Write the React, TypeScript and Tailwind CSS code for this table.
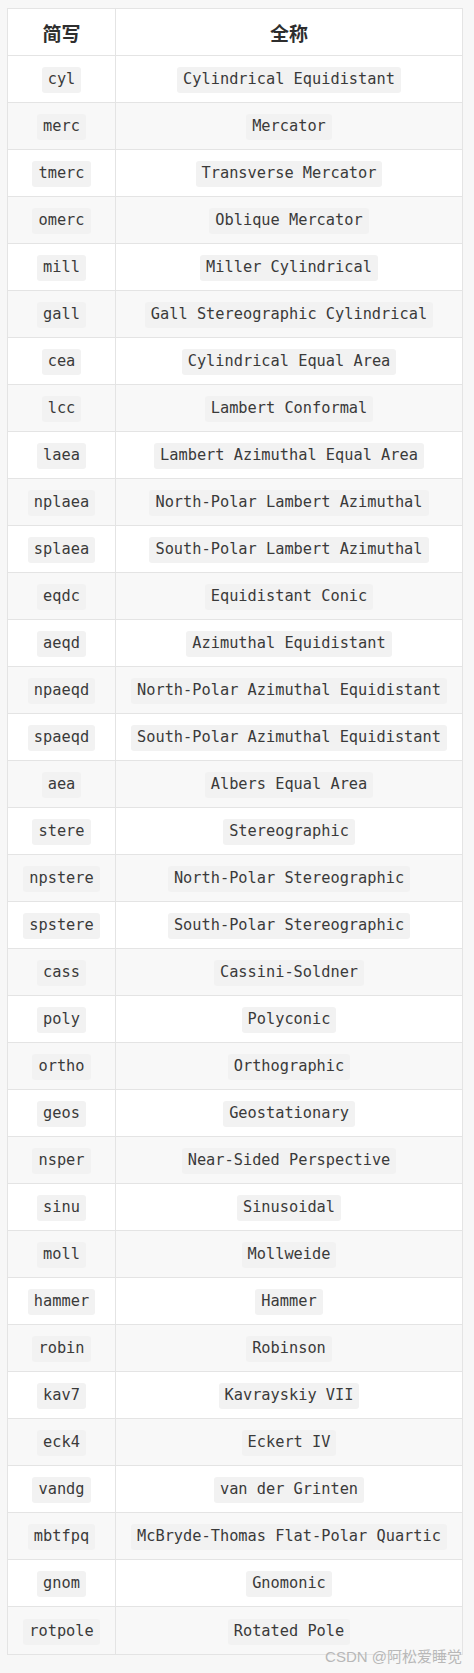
import React from "react";

const rows: [string, string][] = [
  ["cyl", "Cylindrical Equidistant"],
  ["merc", "Mercator"],
  ["tmerc", "Transverse Mercator"],
  ["omerc", "Oblique Mercator"],
  ["mill", "Miller Cylindrical"],
  ["gall", "Gall Stereographic Cylindrical"],
  ["cea", "Cylindrical Equal Area"],
  ["lcc", "Lambert Conformal"],
  ["laea", "Lambert Azimuthal Equal Area"],
  ["nplaea", "North-Polar Lambert Azimuthal"],
  ["splaea", "South-Polar Lambert Azimuthal"],
  ["eqdc", "Equidistant Conic"],
  ["aeqd", "Azimuthal Equidistant"],
  ["npaeqd", "North-Polar Azimuthal Equidistant"],
  ["spaeqd", "South-Polar Azimuthal Equidistant"],
  ["aea", "Albers Equal Area"],
  ["stere", "Stereographic"],
  ["npstere", "North-Polar Stereographic"],
  ["spstere", "South-Polar Stereographic"],
  ["cass", "Cassini-Soldner"],
  ["poly", "Polyconic"],
  ["ortho", "Orthographic"],
  ["geos", "Geostationary"],
  ["nsper", "Near-Sided Perspective"],
  ["sinu", "Sinusoidal"],
  ["moll", "Mollweide"],
  ["hammer", "Hammer"],
  ["robin", "Robinson"],
  ["kav7", "Kavrayskiy VII"],
  ["eck4", "Eckert IV"],
  ["vandg", "van der Grinten"],
  ["mbtfpq", "McBryde-Thomas Flat-Polar Quartic"],
  ["gnom", "Gnomonic"],
  ["rotpole", "Rotated Pole"],
];

function Code({ children }: { children: React.ReactNode }) {
  return (
    <span className="inline-flex h-[26px] items-center rounded-[3px] bg-[#f2f2f2] px-[6px] text-[15.3px] leading-none text-[#3a3a3a] [font-family:'DejaVu_Sans_Mono','Liberation_Mono',monospace]">
      {children}
    </span>
  );
}

export default function App() {
  return (
    <div className="relative h-[1673px] w-[474px] bg-[#f7f7f7] pt-[8px] pl-[7px]">
      <div className="w-[456px] border border-[#e4e4e4] bg-white">
        <div className="flex h-[47px] border-b border-[#e4e4e4] bg-white">
          <div className="flex w-[108px] items-center justify-center border-r border-[#e4e4e4] text-[19px] font-bold leading-none text-[#2e2e2e] [font-family:'Noto_Sans_CJK_SC',sans-serif]">
            简写
          </div>
          <div className="flex flex-1 items-center justify-center text-[19px] font-bold leading-none text-[#2e2e2e] [font-family:'Noto_Sans_CJK_SC',sans-serif]">
            全称
          </div>
        </div>
        {rows.map(([a, b], i) => (
          <div
            key={a}
            className={
              "flex h-[47px] " +
              (i === rows.length - 1 ? "" : "border-b border-[#e4e4e4] ") +
              (i % 2 === 1 ? "bg-[#f8f8f8]" : "bg-white")
            }
          >
            <div className="flex w-[108px] items-center justify-center border-r border-[#e4e4e4] pt-[2px]">
              <Code>{a}</Code>
            </div>
            <div className="flex flex-1 items-center justify-center pt-[2px]">
              <Code>{b}</Code>
            </div>
          </div>
        ))}
      </div>
      <div className="absolute right-[12px] top-[1646px] text-[15px] leading-[22px] text-[#b8b8b8] [font-family:'Liberation_Sans','Noto_Sans_CJK_SC',sans-serif]">
        CSDN @阿松爱睡觉
      </div>
    </div>
  );
}
